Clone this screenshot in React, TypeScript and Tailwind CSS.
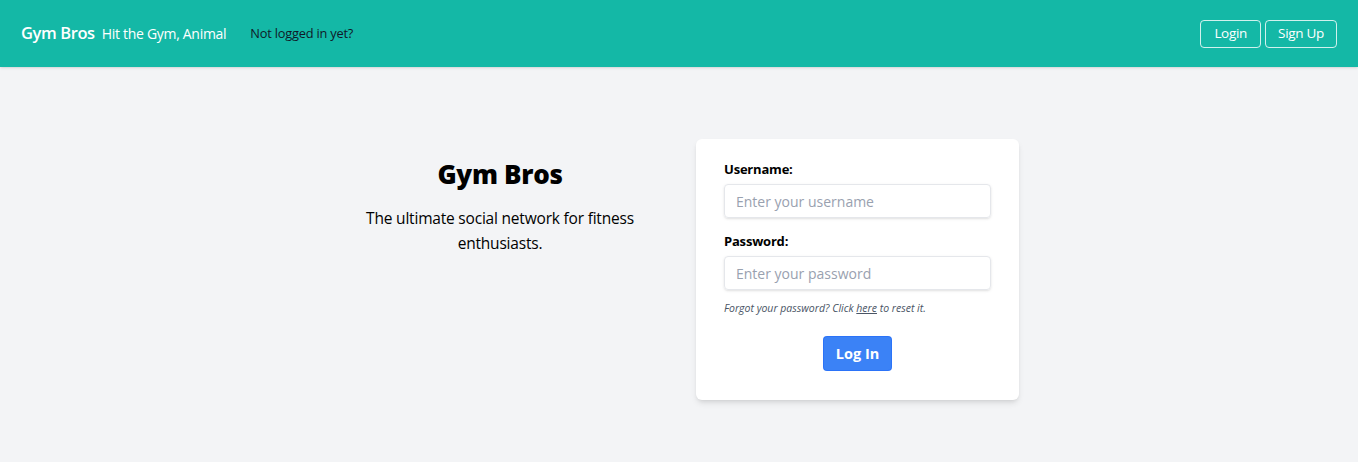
export default function App() {
  return (
    <div className="min-h-screen bg-[#f3f4f6] font-['Open_Sans',sans-serif] text-black">
      {/* Navbar */}
      <nav className="h-[67px] bg-[#14b8a6] shadow-sm flex items-center justify-between px-[21px]">
        <div className="flex items-center">
          <span className="text-white text-[16.5px] font-semibold tracking-[-0.4px]">Gym Bros</span>
          <span className="text-white text-[14px] ml-[7px] tracking-[-0.3px]">Hit the Gym, Animal</span>
          <span className="text-gray-900 text-[12.8px] ml-[24px] tracking-[-0.2px]">Not logged in yet?</span>
        </div>
        <div className="flex items-center gap-[4px]">
          <button className="h-[28px] px-[13px] text-[13.5px] text-white border border-white/80 rounded tracking-[-0.3px]">
            Login
          </button>
          <button className="h-[28px] px-[12px] text-[13.5px] text-white border border-white/80 rounded tracking-[-0.3px]">
            Sign Up
          </button>
        </div>
      </nav>

      {/* Main */}
      <main className="flex justify-center items-start gap-[35px] pt-[72px]">
        <div className="w-[322px] flex flex-col items-center text-center pt-[17px]">
          <h1 className="text-[26px] font-extrabold leading-[36px] tracking-[-0.3px]">Gym Bros</h1>
          <p className="mt-[14px] text-[15.5px] leading-[25px] px-[12px] tracking-[-0.2px]">
            The ultimate social network for fitness enthusiasts.
          </p>
        </div>

        <div className="w-[323px] bg-white rounded-md shadow-md px-[28px] pt-[20px] pb-[29px]">
          <label className="block text-[13px] font-bold leading-[20px] tracking-[-0.2px]">Username:</label>
          <input
            type="text"
            placeholder="Enter your username"
            className="mt-[5px] w-full h-[34px] px-[11px] text-[14px] border border-gray-200 rounded shadow-sm placeholder:text-gray-400 outline-none"
          />
          <label className="block mt-[13px] text-[13px] font-bold leading-[20px] tracking-[-0.2px]">Password:</label>
          <input
            type="password"
            placeholder="Enter your password"
            className="mt-[5px] w-full h-[34px] px-[11px] text-[14px] border border-gray-200 rounded shadow-sm placeholder:text-gray-400 outline-none"
          />
          <p className="mt-[10px] text-[10.5px] italic text-gray-600 leading-[16px]">
            Forgot your password? Click <a href="#" className="underline">here</a> to reset it.
          </p>
          <div className="flex justify-center mt-[20px]">
            <button className="h-[35px] px-[12px] bg-[#3b82f6] text-white text-[14.5px] font-bold rounded border border-blue-600/40">
              Log In
            </button>
          </div>
        </div>
      </main>
    </div>
  );
}
